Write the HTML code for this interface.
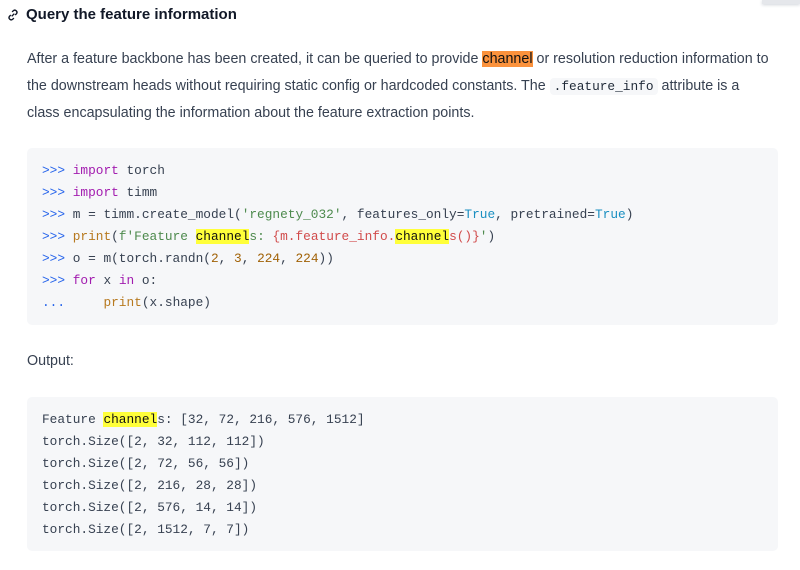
<!DOCTYPE html>
<html><head><meta charset="utf-8"><style>
body{margin:0;width:800px;height:570px;background:#fff;overflow:hidden;position:relative;font-family:"Liberation Sans","DejaVu Sans",sans-serif;color:#374151}
.h{position:absolute;left:6px;top:6px;font-size:15px;font-weight:bold;color:#111827;display:flex;align-items:center}
.h svg{margin-right:6px}
.p{position:absolute;left:27px;top:46px;width:746px;font-size:14.3px;line-height:27px;color:#374151}
.hl{background:#fb923c;color:#111}
.ic{font-family:"Liberation Mono",monospace;font-size:12.8px;background:#f6f7f9;border-radius:4px;padding:1px 4px;color:#1f2937}
pre{position:absolute;left:27px;margin:0;width:751px;background:#f6f7f9;border-radius:5px;font-family:"Liberation Mono",monospace;font-size:12.8px;line-height:22px;color:#374151;padding:0 0 0 15px;box-sizing:border-box}
.b{color:#2563eb}.k{color:#a21caf}.s{color:#4d8a4d}.n{color:#a16207}.f{color:#b7791f}.r{color:#d14b4b}.t{color:#1a8fc1}
.y{background:#ffff3a;color:#111}
.shadow{position:absolute;right:0;top:0;width:38px;height:4px;background:#e5e7eb;box-shadow:0 1px 3px #d1d5db}
</style></head><body>
<div class="shadow"></div>
<div class="h"><svg width="14" height="14" viewBox="0 0 16 16" fill="none" stroke="#111827" stroke-width="1.6"><path d="M6.5 9.5l3-3"/><path d="M7 4.5l1.5-1.5a2.5 2.5 0 013.5 3.5L10.5 8"/><path d="M9 11.5L7.5 13a2.5 2.5 0 01-3.5-3.5L5.5 8"/></svg>Query the feature information</div>
<div class="p">After a feature backbone has been created, it can be queried to provide <span class="hl">channel</span> or resolution reduction information to the downstream heads without requiring static config or hardcoded constants. The <span class="ic">.feature_info</span> attribute is a class encapsulating the information about the feature extraction points.</div>
<pre style="top:148px;height:177px;padding-top:12px"><span class="b">&gt;&gt;&gt;</span> <span class="k">import</span> torch
<span class="b">&gt;&gt;&gt;</span> <span class="k">import</span> timm
<span class="b">&gt;&gt;&gt;</span> m = timm.create_model(<span class="s">'regnety_032'</span>, features_only=<span class="t">True</span>, pretrained=<span class="t">True</span>)
<span class="b">&gt;&gt;&gt;</span> <span class="f">print</span>(<span class="s">f'Feature </span><span class="y">channel</span><span class="s">s: </span><span class="r">{m.feature_info.</span><span class="y">channel</span><span class="r">s()}</span><span class="s">'</span>)
<span class="b">&gt;&gt;&gt;</span> o = m(torch.randn(<span class="n">2</span>, <span class="n">3</span>, <span class="n">224</span>, <span class="n">224</span>))
<span class="b">&gt;&gt;&gt;</span> <span class="k">for</span> x <span class="k">in</span> o:
<span class="b">...</span>     <span class="f">print</span>(x.shape)</pre>
<div style="position:absolute;left:27px;top:353px;font-size:14.3px;color:#374151">Output:</div>
<pre style="top:397px;height:154px;padding-top:12px">Feature <span class="y">channel</span>s: [32, 72, 216, 576, 1512]
torch.Size([2, 32, 112, 112])
torch.Size([2, 72, 56, 56])
torch.Size([2, 216, 28, 28])
torch.Size([2, 576, 14, 14])
torch.Size([2, 1512, 7, 7])</pre>
</body></html>
